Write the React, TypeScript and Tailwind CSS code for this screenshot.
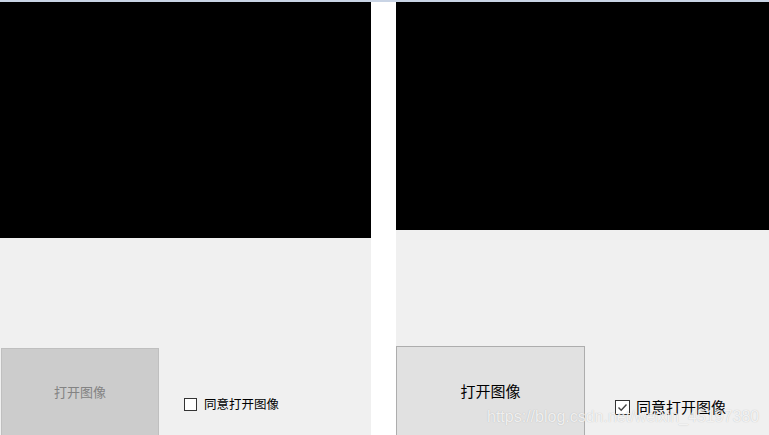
import React from 'react';

const cjk = { fontFamily: '"Noto Sans CJK SC", "Microsoft YaHei", sans-serif' };

const App: React.FC = () => {
  return (
    <div className="relative w-[769px] h-[435px] overflow-hidden bg-white flex flex-col">
      <div className="h-[2px] shrink-0 bg-[#c9d4e5]" />
      <div className="flex flex-1 min-h-0">
        {/* left window: disabled state */}
        <div className="w-[371px] flex flex-col bg-[#f0f0f0] overflow-hidden">
          <div className="h-[236px] shrink-0 bg-black" />
          <div className="flex items-start shrink-0">
            <button
              disabled
              className="ml-[1px] mt-[110px] w-[158px] h-[90px] shrink-0 bg-[#cccccc] border border-[#bfbfbf] text-[#838383] text-[13px] pb-[3px]"
              style={cjk}
            >
              打开图像
            </button>
            <label className="ml-[25px] mt-[157px] flex items-center gap-[7px] text-[12.5px] text-black" style={cjk}>
              <span className="w-[13px] h-[13px] border border-[#333] bg-white" />
              同意打开图像
            </label>
          </div>
        </div>

        <div className="w-[25px] shrink-0 bg-white" />

        {/* right window: enabled state */}
        <div className="flex-1 flex flex-col bg-[#f0f0f0] overflow-hidden">
          <div className="h-[228px] shrink-0 bg-black" />
          <div className="flex items-start shrink-0">
            <button
              className="mt-[116px] w-[189px] h-[92px] shrink-0 bg-[#e1e1e1] border border-[#adadad] text-black text-[15px] pb-[1px]"
              style={cjk}
            >
              打开图像
            </button>
            <label className="ml-[30px] mt-[166px] flex items-center gap-[6px] text-[15px] text-black" style={cjk}>
              <span className="w-[15px] h-[15px] border border-[#333] bg-white flex items-center justify-center">
                <svg width="11" height="11" viewBox="0 0 11 11">
                  <path d="M1.5 5.5 L4.2 8.2 L9.5 2.5" fill="none" stroke="#444" strokeWidth="1.4" />
                </svg>
              </span>
              同意打开图像
            </label>
          </div>
        </div>
      </div>

      <div
        className="absolute left-[487px] top-[405px] text-[16px] text-white/80 whitespace-nowrap pointer-events-none [text-shadow:0_0_1px_rgba(0,0,0,0.25)]"
        style={{ fontFamily: '"Liberation Sans", Arial, sans-serif' }}
      >
        https://blog.csdn.net/weixin_45197380
      </div>
    </div>
  );
};

export default App;
